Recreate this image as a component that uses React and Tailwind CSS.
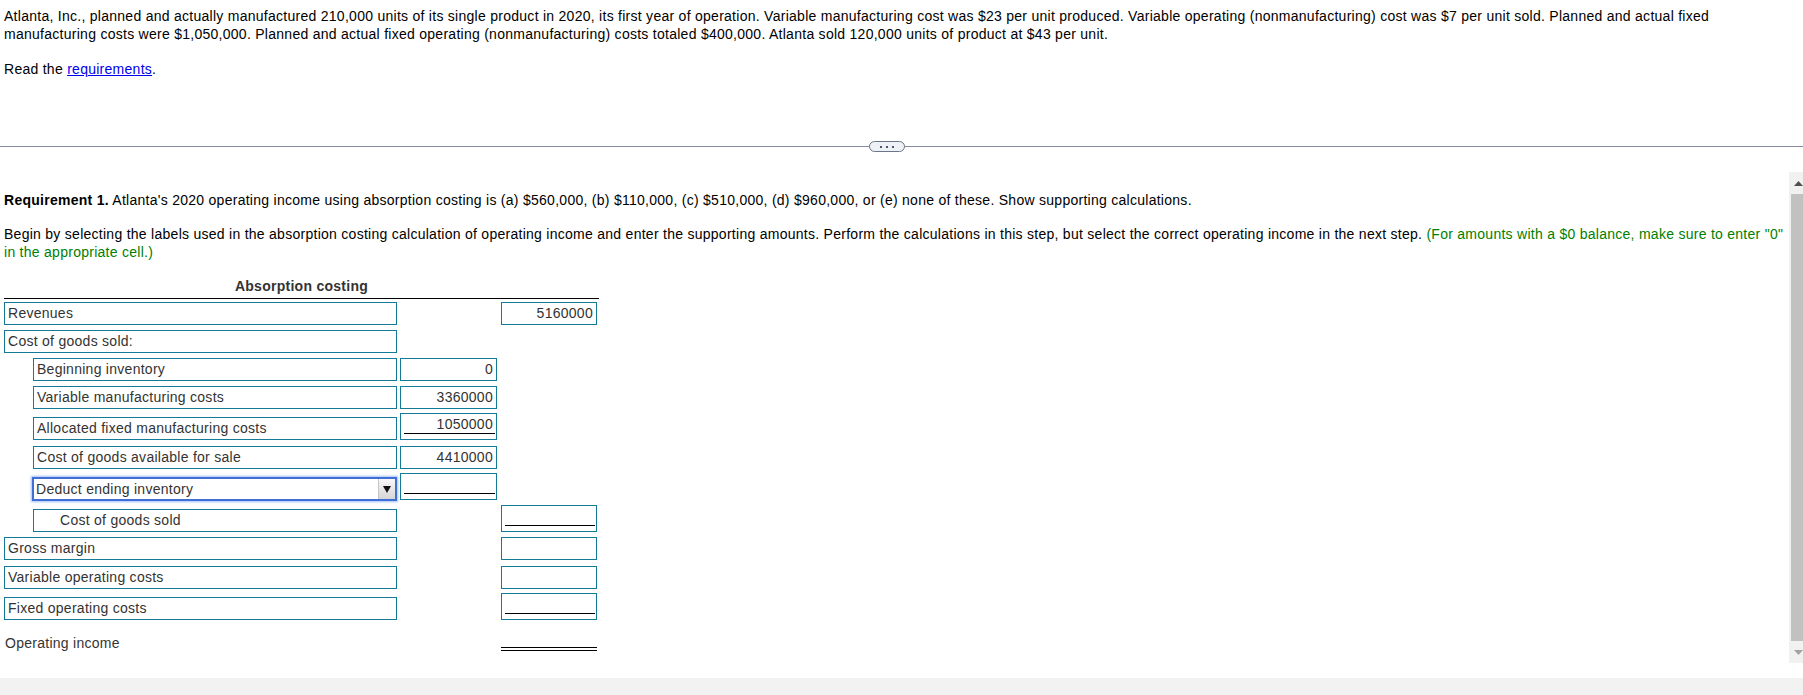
import React from 'react';

function Box({ children, tall, underline, right, className = '' }) {
  return (
    <div
      className={`border border-[#137a98] bg-white px-[3px] text-[14px] text-[#333] whitespace-nowrap ${
        tall ? 'h-[27px]' : 'h-[23px]'
      } ${right ? 'text-right' : ''} ${className}`}
    >
      <div className={underline ? 'h-[19px] leading-[21px]' : 'leading-[21px]'}>{children}</div>
      {underline && <div className="h-px bg-black mr-[-2px]" />}
    </div>
  );
}

function Label({ text, indent, pad }) {
  return (
    <div className="w-[393px] flex">
      <Box className={`flex-1 ${indent ? 'ml-[29px]' : ''} ${pad ? 'pl-[26px]' : ''}`}>{text}</Box>
    </div>
  );
}

const Mid = ({ children, ...rest }) =>
  children !== undefined || rest.underline ? (
    <Box right className="ml-[3px] w-[97px]" {...rest}>
      {children}
    </Box>
  ) : (
    <div className="ml-[3px] w-[97px]" />
  );

const Right = ({ children, ...rest }) => (
  <Box right className="ml-[4px] w-[96px]" {...rest}>
    {children}
  </Box>
);

export default function App() {
  return (
    <div className="w-[1803px] h-[695px] overflow-hidden bg-white flex flex-col font-['Liberation_Sans',Arial,sans-serif] text-[14px] leading-[18px] tracking-[0.27px] text-black">
      {/* Problem text */}
      <div className="px-[4px] pt-[7px]">
        <p>
          Atlanta, Inc., planned and actually manufactured 210,000 units of its single product in 2020, its first year of
          operation. Variable manufacturing cost was $23 per unit produced. Variable operating (nonmanufacturing) cost was $7
          per unit sold. Planned and actual fixed manufacturing costs were $1,050,000. Planned and actual fixed operating
          (nonmanufacturing) costs totaled $400,000. Atlanta sold 120,000 units of product at $43 per unit.
        </p>
        <p className="mt-[17px]">
          Read the <a className="text-[#0000ee] underline">requirements</a>.
        </p>
      </div>

      {/* Divider */}
      <div className="relative mt-[68px] h-px bg-[#858d9c]">
        <div className="absolute left-[869px] top-[-5px] w-[36px] h-[11px] rounded-full border border-[#6b7585] bg-[#eef1f5] flex items-center justify-center gap-[4px]">
          <span className="w-[2px] h-[2px] bg-[#4f5766]" />
          <span className="w-[2px] h-[2px] bg-[#4f5766]" />
          <span className="w-[2px] h-[2px] bg-[#4f5766]" />
        </div>
      </div>

      {/* Scroll panel */}
      <div className="mt-[25px] h-[491px] flex">
        <div className="flex-1 pl-[4px] pt-[19px]">
          <p>
            <b>Requirement 1.</b> Atlanta's 2020 operating income using absorption costing is (a) $560,000, (b) $110,000, (c)
            $510,000, (d) $960,000, or (e) none of these. Show supporting calculations.
          </p>
          <p className="mt-[16px] mr-[-8px]">
            Begin by selecting the labels used in the absorption costing calculation of operating income and enter the
            supporting amounts. Perform the calculations in this step, but select the correct operating income in the next
            step.{' '}
            <span className="text-[#008000]">
              (For amounts with a $0 balance, make sure to enter "0" in the appropriate cell.)
            </span>
          </p>

          {/* Absorption costing table */}
          <div className="w-[595px] mt-[16px]">
            <div className="text-center font-bold text-[#333]">Absorption costing</div>
            <div className="mt-[3px] h-px bg-black" />

            <div className="mt-[3px] flex items-end">
              <Label text="Revenues" />
              <Mid />
              <Right>5160000</Right>
            </div>
            <div className="mt-[5px] flex items-end">
              <Label text="Cost of goods sold:" />
            </div>
            <div className="mt-[5px] flex items-end">
              <Label indent text="Beginning inventory" />
              <Mid>0</Mid>
            </div>
            <div className="mt-[5px] flex items-end">
              <Label indent text="Variable manufacturing costs" />
              <Mid>3360000</Mid>
            </div>
            <div className="mt-[4px] flex items-end">
              <Label indent text="Allocated fixed manufacturing costs" />
              <Mid tall underline>
                1050000
              </Mid>
            </div>
            <div className="mt-[6px] flex items-end">
              <Label indent text="Cost of goods available for sale" />
              <Mid>4410000</Mid>
            </div>
            <div className="mt-[4px] flex items-start">
              <div className="w-[393px] pl-[28px] pt-[4px]">
                <div className="h-[24px] border-2 border-[#3f6fd6] shadow-[0_0_2px_1px_rgba(90,140,235,0.55)] bg-white flex items-stretch justify-between">
                  <span className="pl-[2px] leading-[20px] text-[#333]">Deduct ending inventory</span>
                  <span className="w-[17px] border-l border-[#c4c4c4] bg-gradient-to-b from-[#f8f8f8] to-[#d6d6d6] flex items-center justify-center">
                    <svg width="8" height="7" viewBox="0 0 8 7">
                      <polygon points="0,0 8,0 4,7" fill="#111" />
                    </svg>
                  </span>
                </div>
              </div>
              <Mid tall underline />
            </div>
            <div className="mt-[4px] flex items-end">
              <Label indent pad text="Cost of goods sold" />
              <Mid />
              <Right tall underline />
            </div>
            <div className="mt-[5px] flex items-end">
              <Label text="Gross margin" />
              <Mid />
              <Right />
            </div>
            <div className="mt-[6px] flex items-end">
              <Label text="Variable operating costs" />
              <Mid />
              <Right />
            </div>
            <div className="mt-[4px] flex items-end">
              <Label text="Fixed operating costs" />
              <Mid />
              <Right tall underline />
            </div>
            <div className="mt-[14px] flex items-start">
              <div className="w-[393px] pl-px text-[#333]">Operating income</div>
              <div className="ml-[3px] w-[97px]" />
              <div className="ml-[4px] w-[96px] pt-[13px]">
                <div className="h-px bg-black" />
                <div className="mt-[2px] h-px bg-black" />
              </div>
            </div>
          </div>
        </div>

        {/* Scrollbar */}
        <div className="w-[14px] bg-[#f1f1f1] flex flex-col">
          <div className="h-[22px] flex items-center pl-[5px]">
            <svg width="9" height="5" viewBox="0 0 9 5">
              <polygon points="0,5 4.5,0 9,5" fill="#505050" />
            </svg>
          </div>
          <div className="flex-1 ml-[2px] bg-[#c1c1c1]" />
          <div className="h-[22px] flex items-center pl-[5px]">
            <svg width="9" height="5" viewBox="0 0 9 5">
              <polygon points="0,0 9,0 4.5,5" fill="#a3a3a3" />
            </svg>
          </div>
        </div>
      </div>

      <div className="mt-[15px] flex-1 bg-[#f2f2f2]" />
    </div>
  );
}
